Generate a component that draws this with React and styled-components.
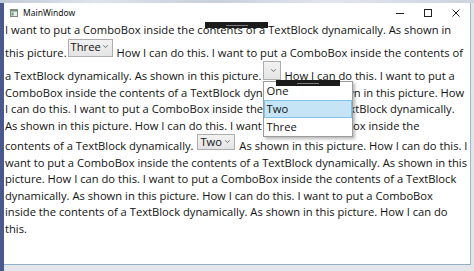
import React from "react";
import styled, { createGlobalStyle } from "styled-components";

const GlobalStyle = createGlobalStyle`
  html, body { margin: 0; padding: 0; background: #e7e8eb; }
  body { width: 474px; height: 271px; overflow: hidden; }
`;

const Desktop = styled.div`
  position: relative;
  width: 474px;
  height: 271px;
  overflow: hidden;
  display: grid;
  grid-template-columns: 4px 467px 1fr;
  grid-template-rows: 3px 262px 1fr;
  background: #e4e5e8;
`;

const TopStrip = styled.div`
  grid-column: 1 / -1;
  grid-row: 1;
  background: linear-gradient(90deg, #c3cad8 0%, #dfe3ea 20%, #c9cfdb 45%, #e2e5ec 70%, #cdd3df 100%);
`;

const LeftStrip = styled.div`
  grid-column: 1;
  grid-row: 2 / -1;
  background: #4a598d;
`;

const Window = styled.div`
  grid-column: 2;
  grid-row: 2;
  position: relative;
  display: flex;
  flex-direction: column;
  background: #ffffff;
  border-right: 1px solid #9db7cd;
  border-bottom: 1px solid #8eaec9;
  box-sizing: border-box;
`;

const TitleBar = styled.div`
  height: 19px;
  display: flex;
  align-items: center;
  font-family: "Noto Sans", "Open Sans", sans-serif;
  font-size: 8.5px;
  color: #111;
`;

const AppIcon = styled.svg`
  width: 8px;
  height: 8px;
  margin-left: 6px;
  flex: none;
`;

const Title = styled.span`
  margin-left: 5px;
  flex: 1;
`;

const CaptionButton = styled.div`
  width: 28px;
  height: 19px;
  display: flex;
  align-items: center;
  justify-content: center;
  svg { width: 8px; height: 8px; }
`;

const Content = styled.div`
  font-family: "Open Sans", "Noto Sans", sans-serif;
  font-size: 11.2px;
  line-height: 16.5px;
  color: #121212;
  padding-left: 1px;
`;

const Line = styled.div`
  white-space: nowrap;
`;

const ComboWrap = styled.span`
  position: relative;
  display: inline-block;
  vertical-align: baseline;
  line-height: 0;
  margin: 0 1px 0 1px;
`;

const ComboFace = styled.span`
  display: inline-block;
  overflow: hidden;
  vertical-align: baseline;
  box-sizing: border-box;
  width: ${(p) => p.$w}px;
  height: ${(p) => p.$h}px;
  border: 1px solid #adadad;
  background: linear-gradient(#f2f2f2, #e4e4e4);
`;

const FaceRow = styled.span`
  display: flex;
  align-items: flex-start;
  justify-content: space-between;
  height: 100%;
  padding: 0 4px 0 2px;
  box-sizing: border-box;
`;

const FaceLabel = styled.span`
  line-height: 14px;
  font-size: 11.2px;
`;

const Chevron = styled.svg`
  width: 5px;
  height: 3px;
  margin-top: ${(p) => p.$top}px;
  flex: none;
`;

const Popup = styled.div`
  position: absolute;
  left: 0;
  top: calc(100% + 1px);
  width: 90px;
  box-sizing: border-box;
  background: #fff;
  border: 1px solid #9c9c9c;
  box-shadow: 2px 2px 3px rgba(0, 0, 0, 0.28);
  display: flex;
  flex-direction: column;
  z-index: 2;
`;

const Item = styled.div`
  height: 18px;
  box-sizing: border-box;
  padding-left: 2px;
  line-height: 15px;
  border: 1px solid ${(p) => (p.$selected ? "#7fc3ea" : "transparent")};
  background: ${(p) => (p.$selected ? "#c5e5f7" : "transparent")};
`;

const DarkBar = styled.div`
  position: absolute;
  left: ${(p) => p.$x}px;
  top: ${(p) => p.$y}px;
  width: ${(p) => p.$w}px;
  height: 6px;
  background: #1b1b1b;
  display: flex;
  align-items: center;
  justify-content: center;
  z-index: 3;
  &::after {
    content: "";
    width: 22px;
    height: 1px;
    background: #7a7a7a;
  }
`;

const LINES = [
  ["I want to put a ComboBox inside the contents of a TextBlock dynamically. As shown in"],
  ["this picture.", { label: "Three", w: 45, h: 18 }, " How I can do this. I want to put a ComboBox inside the contents of"],
  ["a TextBlock dynamically. As shown in this picture.", { label: "", w: 18, h: 19, open: true }, " How I can do this. I want to put a"],
  ["ComboBox inside the contents of a TextBlock dynamically. As shown in this picture. How"],
  ["I can do this. I want to put a ComboBox inside the contents of a TextBlock dynamically."],
  ["As shown in this picture. How I can do this. I want to put a ComboBox inside the"],
  ["contents of a TextBlock dynamically. ", { label: "Two", w: 38, h: 16 }, " As shown in this picture. How I can do this. I"],
  ["want to put a ComboBox inside the contents of a TextBlock dynamically. As shown in this"],
  ["picture. How I can do this. I want to put a ComboBox inside the contents of a TextBlock"],
  ["dynamically. As shown in this picture. How I can do this. I want to put a ComboBox"],
  ["inside the contents of a TextBlock dynamically. As shown in this picture. How I can do"],
  ["this."],
];

function ComboBox({ label, w, h, open }) {
  return (
    <ComboWrap>
      <ComboFace $w={w} $h={h}>
        <FaceRow>
          <FaceLabel>{label}</FaceLabel>
          <Chevron $top={label ? 5 : 7} viewBox="0 0 5 3">
            <path d="M0.3 0.3 L2.5 2.6 L4.7 0.3" fill="none" stroke="#666" strokeWidth="0.9" />
          </Chevron>
        </FaceRow>
      </ComboFace>
      {open && (
        <Popup>
          <DarkBar $x={12} $y={-2} $w={64} />
          <Item>One</Item>
          <Item $selected>Two</Item>
          <Item>Three</Item>
        </Popup>
      )}
    </ComboWrap>
  );
}

export default function App() {
  return (
    <>
      <GlobalStyle />
      <Desktop>
        <TopStrip />
        <LeftStrip />
        <Window>
          <TitleBar>
            <AppIcon viewBox="0 0 8 8">
              <rect x="0.5" y="0.5" width="7" height="7" fill="#e9ece9" stroke="#7d8a80" />
              <rect x="1" y="1" width="6" height="1.5" fill="#6f8f76" />
              <rect x="1.5" y="3.5" width="2" height="3" fill="#5c9a6a" />
            </AppIcon>
            <Title>MainWindow</Title>
            <CaptionButton>
              <svg viewBox="0 0 8 8"><path d="M0 4.5 H8" stroke="#222" strokeWidth="1" /></svg>
            </CaptionButton>
            <CaptionButton>
              <svg viewBox="0 0 8 8"><rect x="0.5" y="0.5" width="7" height="7" fill="none" stroke="#222" strokeWidth="1" /></svg>
            </CaptionButton>
            <CaptionButton>
              <svg viewBox="0 0 8 8"><path d="M0.5 0.5 L7.5 7.5 M7.5 0.5 L0.5 7.5" stroke="#222" strokeWidth="1" /></svg>
            </CaptionButton>
          </TitleBar>
          <DarkBar $x={201} $y={19} $w={63} />
          <Content>
            {LINES.map((segs, i) => (
              <Line key={i}>
                {segs.map((s, j) =>
                  typeof s === "string" ? <React.Fragment key={j}>{s}</React.Fragment> : <ComboBox key={j} {...s} />
                )}
              </Line>
            ))}
          </Content>
        </Window>
      </Desktop>
    </>
  );
}
